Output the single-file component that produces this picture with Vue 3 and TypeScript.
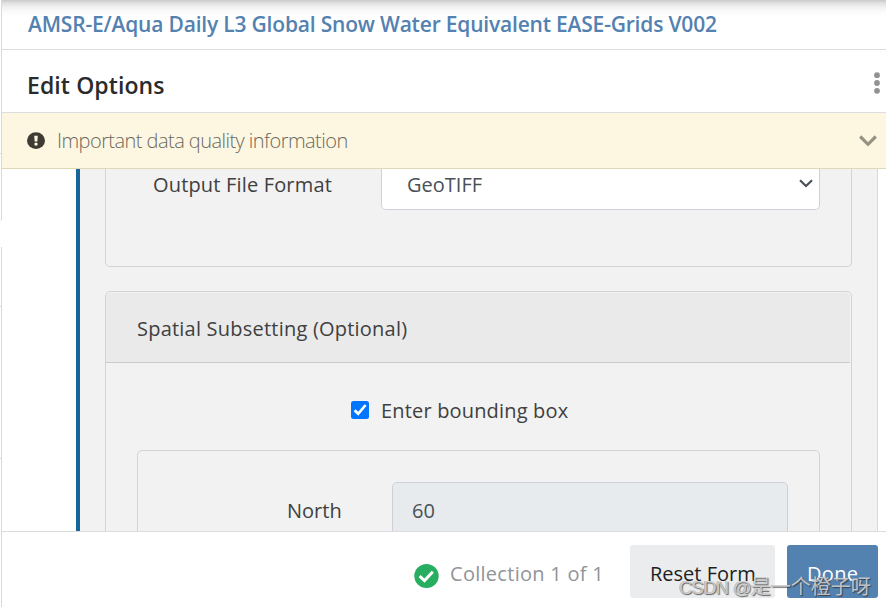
<script setup lang="ts">
import { ref } from 'vue'

const formats = ['GeoTIFF']
const format = ref('GeoTIFF')
const boundingBox = ref(true)
const north = ref('60')
</script>

<template>
  <div class="page">
    <div class="rail">
      <div class="rail-top"><i></i></div>
      <div class="rail-bottom"><i></i><i></i></div>
    </div>
    <main class="panel">
      <header class="collection"><a class="t-title">AMSR-E/Aqua Daily L3 Global Snow Water Equivalent EASE-Grids V002</a></header>
      <div class="heading">
        <h1><span class="t-edit">Edit Options</span></h1>
        <svg class="dots" width="6" height="22" viewBox="0 0 6 22" fill="#929292">
          <circle cx="3" cy="3.2" r="2.9" /><circle cx="3" cy="11" r="2.9" /><circle cx="3" cy="18.8" r="2.9" />
        </svg>
      </div>
      <div class="notice">
        <svg class="alert" width="18" height="18" viewBox="0 0 18 18">
          <ellipse cx="9" cy="8.6" rx="9" ry="8.4" fill="#3d3b34" />
          <path d="M7.2 3.8h3.6l-.5 5.8H7.7z" fill="#fdf7e2" />
          <circle cx="9" cy="12.1" r="1.7" fill="#fdf7e2" />
        </svg>
        <span class="t-important">Important data quality information</span>
        <svg class="expand" width="18" height="12" viewBox="0 0 18 12" fill="none" stroke="#979383" stroke-width="3.2">
          <path d="M1.2 1.5 9 9.3l7.8-7.8" />
        </svg>
      </div>
      <section class="content">
        <div class="form">
          <div class="card format-card">
            <label class="format-label"><span class="t-output">Output File Format</span></label>
            <div class="select">
              <span v-for="f in formats" :key="f" v-show="f === format" class="t-geo">{{ f }}</span>
              <svg width="14" height="9" viewBox="0 0 14 9" fill="none" stroke="#484f56" stroke-width="2.1">
                <path d="M1 1.2 7 7l6-5.8" />
              </svg>
            </div>
          </div>
          <div class="card spatial-card">
            <div class="card-head"><span class="t-spatial">Spatial Subsetting (Optional)</span></div>
            <label class="check-row">
              <svg v-if="boundingBox" width="18" height="18" viewBox="0 0 18 18">
                <rect width="18" height="18" rx="2.5" fill="#0075ff" />
                <path d="M3.6 9.3 7.2 12.8 14.6 4" fill="none" stroke="#fff" stroke-width="2.7" />
              </svg>
              <span class="t-enter">Enter bounding box</span>
            </label>
            <div class="box">
              <label><span class="t-north">North</span></label>
              <div class="input"><span class="t-sixty">{{ north }}</span></div>
            </div>
          </div>
        </div>
      </section>
      <footer class="footer">
        <svg class="ok" width="25" height="24" viewBox="0 0 25 24">
          <ellipse cx="12.5" cy="12" rx="12.2" ry="12" fill="#28ae60" />
          <path d="m5.6 12.1 4.9 4.5 8.3-8.8" fill="none" stroke="#fff" stroke-width="2.9" />
        </svg>
        <span class="count"><span class="t-count">Collection 1 of 1</span></span>
        <button class="btn reset"><span class="t-reset">Reset Form</span></button>
        <button class="btn done"><span class="t-done">Done</span></button>
        <span class="watermark"><span class="latin">CSDN @</span>是一个橙子呀</span>
      </footer>
    </main>
  </div>
</template>

<style>
body { background: #fff; overflow: hidden; }
</style>

<style scoped>
* { box-sizing: border-box; }
.page {
  display: flex;
  width: 886px;
  height: 607px;
  overflow: hidden;
  font-family: "Open Sans", "Noto Sans", sans-serif;
  font-size: 20px;
  line-height: 28px;
  color: #404040;
  white-space: nowrap;
}
.page span, .page a { flex: none; }
.t-title { letter-spacing: -0.195px; }
.t-edit { letter-spacing: 0.1px; }
.t-important { letter-spacing: -0.55px; }
.t-output { letter-spacing: 0.17px; }
.t-spatial { letter-spacing: 0.22px; }
.t-enter { letter-spacing: 0.17px; padding-top: 2px; }
.t-count { letter-spacing: 0.28px; }
.t-done { letter-spacing: 0.3px; }
.rail { width: 2px; display: flex; flex-direction: column; gap: 26px; }
.rail-top { height: 221px; border-right: 1px solid #d9d9db; border-bottom-right-radius: 2px; padding-top: 153px; }
.rail-bottom { flex: 1; border-right: 1px solid #d9d9db; padding-top: 59px; }
.rail i { display: block; height: 1px; background: #dcdcdc; }
.rail-bottom i + i { margin-top: 151px; }
.panel { width: 884px; display: flex; flex-direction: column; }
.collection {
  height: 50px;
  border-bottom: 1px solid #dcdcdf;
  padding: 10px 0 0 26px;
  color: #5381b0;
  font-size: 21px;
  font-weight: 600;
  background: linear-gradient(#c9c9c9 0, #dfdfdf 3px, #f1f1f1 7px, #fbfbfb 12px, #fff 17px);
}
.heading {
  height: 63px;
  border-bottom: 1px solid #dcdcdf;
  padding: 0 6px 0 25px;
  display: flex;
  align-items: flex-start;
  justify-content: space-between;
}
h1 { margin: 21px 0 0; font-size: 23px; line-height: 28px; font-weight: 600; color: #2a2b2c; }
.dots { margin-top: 22px; }
.notice {
  height: 56px;
  background: #fdf7e2;
  border-bottom: 1px solid #e0d9b5;
  display: flex;
  align-items: center;
  padding: 0 9px 0 25px;
  font-weight: 300;
  color: #6b695d;
}
.alert { margin-right: 12px; }
.t-important { padding-top: 1px; }
.expand { margin-left: auto; }
.content { height: 362px; overflow: hidden; padding-left: 74px; }
.form {
  width: 802px;
  height: 362px;
  border-left: 4px solid #17669a;
  border-right: 1px solid #d9d9db;
  background: #f2f2f2;
  padding: 0 25px;
}
.card { width: 747px; border: 1px solid #d3d3d5; border-radius: 5px; }
.format-card { height: 98px; border-top: 0; border-top-left-radius: 0; border-top-right-radius: 0; display: flex; padding-right: 31px; }
.format-label { width: 275px; padding: 2px 0 0 47px; }
.select {
  flex: 1;
  height: 41px;
  border: 1px solid #ced2d8;
  border-top: 0;
  border-radius: 0 0 5px 5px;
  background: #fff;
  color: #495057;
  display: flex;
  justify-content: space-between;
  padding: 2px 6px 0 25px;
}
.select svg { margin-top: 8px; }
.spatial-card { margin-top: 24px; height: 300px; padding: 1px 1px 0 0; }
.card-head { height: 70px; background: #eaeaea; border-bottom: 1px solid #cbcbcb; border-radius: 4px 4px 0 0; padding: 22px 0 0 31px; }
.check-row { display: flex; align-items: center; gap: 12px; margin: 33px 0 0 245px; height: 28px; }
.box {
  margin: 26px 30px 0 31px;
  height: 150px;
  border: 1px solid #d3d3d5;
  border-radius: 5px;
  display: flex;
  padding: 31px 31px 0 0;
}
.box label { width: 254px; padding: 15px 0 0 149px; }
.input { flex: 1; height: 80px; background: #e7ebee; border: 1px solid #ccd1d8; border-radius: 5px; padding: 14px 0 0 19px; color: #495057; }
.footer { position: relative; height: 76px; border-top: 1px solid #dcdcdf; display: flex; padding: 13px 8px 0 412px; }
.ok { margin-top: 19px; }
.count { margin: 15px 0 0 11px; width: 180px; color: #929497; }
.btn { border: 0; border-radius: 3px; height: 53px; padding: 5px 0 0 20px; font: inherit; text-align: left; }
.reset { width: 145px; background: #ebecee; color: #1d1f22; margin-right: 12px; }
.done { width: 91px; background: #5381b0; color: #fff; }
.watermark {
  position: absolute;
  left: 677px;
  top: 42px;
  font-family: "Liberation Sans", "Noto Sans CJK SC", sans-serif;
  font-size: 20px;
  line-height: 26px;
  color: rgba(225, 225, 225, 0.8);
  text-shadow: 1px 1px 1px rgba(40, 40, 40, 0.7), -0.5px -0.5px 0 rgba(90, 90, 90, 0.5);
}
.latin { font-size: 18.5px; letter-spacing: -0.75px; }
</style>
